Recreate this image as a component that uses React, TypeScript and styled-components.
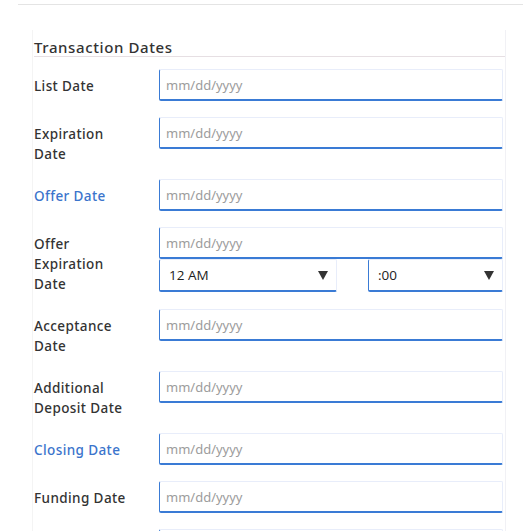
import React from "react";
import styled, { createGlobalStyle } from "styled-components";

const Global = createGlobalStyle`
  html, body { margin: 0; padding: 0; background: #ffffff; }
  body { font-family: "Noto Sans", "Open Sans", sans-serif; color: #333; }
  * { box-sizing: border-box; }
`;

const Page = styled.div`
  width: 523px;
  height: 531px;
  overflow: hidden;
  padding-top: 4px;
`;

const TopRule = styled.div`
  margin-left: 18px;
  height: 1px;
  background: #e4e4e4;
`;

const Panel = styled.section`
  margin: 25px 0 0 32px;
  width: 474px;
  padding-left: 1px;
  border-left: 1px solid #f4f4f4;
  border-right: 1px solid #f1f1f5;
`;

const Heading = styled.h3`
  margin: 0 0 12px 0;
  padding-top: 9px;
  font-size: 15px;
  font-weight: 500;
  line-height: 17px;
  letter-spacing: 0.6px;
  color: #333;
  border-bottom: 1px solid #e6dfe3;
`;

const Row = styled.div`
  display: flex;
  align-items: flex-start;
  margin-bottom: 16px;
`;

const Label = styled.label<{ $accent?: boolean }>`
  width: 125px;
  flex: none;
  padding: 7px 28px 0 0;
  margin-bottom: -1px;
  font-size: 13.5px;
  font-weight: 500;
  line-height: 20px;
  letter-spacing: 0.4px;
  color: ${(p) => (p.$accent ? "#3b74cc" : "#333")};
`;

const Control = styled.div`
  flex: 1;
  margin-right: 2px;
  display: flex;
  flex-direction: column;
`;

const DateInput = styled.input`
  width: 100%;
  height: 32px;
  margin: 0;
  padding: 0 6px;
  border: 1px solid #e8edfa;
  border-left-color: #3a7bd5;
  border-bottom: 2px solid #3a7bd5;
  border-radius: 2px;
  background: #fff;
  font-family: "Noto Sans", sans-serif;
  font-size: 13px;
  color: #555;
  outline: none;
  &::placeholder { color: #9c9c9c; }
`;

const SelectRow = styled.div`
  display: grid;
  grid-template-columns: 178px 135px;
  justify-content: space-between;
`;

const SelectBox = styled.div`
  height: 33px;
  display: flex;
  align-items: center;
  justify-content: space-between;
  padding: 0 8px 0 9px;
  border: 1px solid #e8edfa;
  border-left-color: #3a7bd5;
  border-bottom: 2px solid #3a7bd5;
  border-radius: 2px;
  font-family: "Open Sans", "Liberation Sans", sans-serif;
  font-size: 13.5px;
  color: #222;
`;

const Caret = () => (
  <svg width="10" height="9" viewBox="0 0 10 9" aria-hidden="true">
    <polygon points="0,0 10,0 5,9" fill="#333" />
  </svg>
);

type Field = { label: string; accent?: boolean; time?: boolean };

const fields: Field[] = [
  { label: "List Date" },
  { label: "Expiration Date" },
  { label: "Offer Date", accent: true },
  { label: "Offer Expiration Date", time: true },
  { label: "Acceptance Date" },
  { label: "Additional Deposit Date" },
  { label: "Closing Date", accent: true },
  { label: "Funding Date" },
  { label: "" },
];

export default function App() {
  return (
    <Page>
      <Global />
      <TopRule />
      <Panel>
        <Heading>Transaction Dates</Heading>
        {fields.map((f, i) => (
          <Row key={i}>
            <Label $accent={f.accent}>{f.label}</Label>
            <Control>
              <DateInput placeholder="mm/dd/yyyy" />
              {f.time && (
                <SelectRow>
                  <SelectBox>
                    <span>12 AM</span>
                    <Caret />
                  </SelectBox>
                  <SelectBox>
                    <span>:00</span>
                    <Caret />
                  </SelectBox>
                </SelectRow>
              )}
            </Control>
          </Row>
        ))}
      </Panel>
    </Page>
  );
}
